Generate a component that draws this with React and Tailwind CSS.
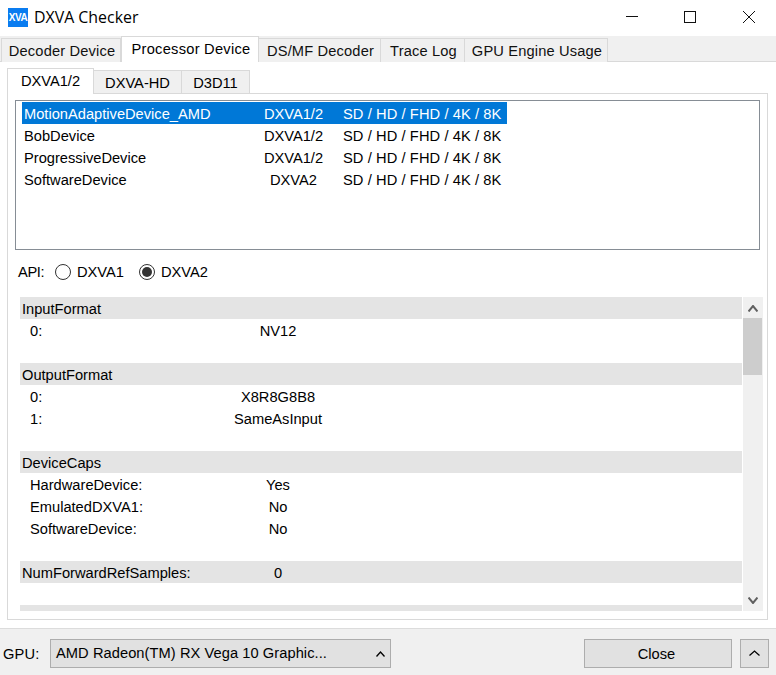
import React from "react";

const sections = [
  { head: "InputFormat", rows: [["0:", "NV12"]] },
  { head: "OutputFormat", rows: [["0:", "X8R8G8B8"], ["1:", "SameAsInput"]] },
  { head: "DeviceCaps", rows: [["HardwareDevice:", "Yes"], ["EmulatedDXVA1:", "No"], ["SoftwareDevice:", "No"]] },
  { head: "NumForwardRefSamples:", value: "0", rows: [] },
  { head: "NumBackwardRefSamples:", value: "0", rows: [] },
];

const devices = [
  ["MotionAdaptiveDevice_AMD", "DXVA1/2"],
  ["BobDevice", "DXVA1/2"],
  ["ProgressiveDevice", "DXVA1/2"],
  ["SoftwareDevice", "DXVA2"],
];

function Tab({ label, width, active, noLeft }) {
  return active ? (
    <div style={{ width }} className="h-[26px] -mb-px bg-white border border-b-0 border-[#d9d9d9] flex justify-center pt-px pl-[2px] text-black z-10 tracking-[0.25px]">
      {label}
    </div>
  ) : (
    <div style={{ width }} className={`h-[24px] mt-[2px] bg-[#f0f0f0] border border-b-0 border-[#d9d9d9] flex justify-center pt-px pl-[2px] text-[#111] tracking-[0.15px] ${noLeft ? "border-l-0" : ""}`}>
      {label}
    </div>
  );
}

function Chevron({ up = true, color = "#000", w = 10, h = 6, sw = 1.3 }) {
  return (
    <svg width={w} height={h} viewBox={`0 0 ${w} ${h}`} fill="none" stroke={color} strokeWidth={sw}>
      <path d={up ? `M0.5 ${h - 0.5} L${w / 2} 1 L${w - 0.5} ${h - 0.5}` : `M0.5 0.5 L${w / 2} ${h - 1} L${w - 0.5} 0.5`} />
    </svg>
  );
}

function Radio({ checked }) {
  return (
    <span className="w-[16px] h-[16px] rounded-full border border-[#333] flex items-center justify-center bg-white">
      {checked && <span className="w-[10px] h-[10px] rounded-full bg-[#333]" />}
    </span>
  );
}

export default function App() {
  return (
    <div className="w-[776px] h-[675px] overflow-hidden bg-white flex flex-col font-['Liberation_Sans',sans-serif] text-[14.67px] leading-[22px] text-black">
      {/* Title bar */}
      <div className="h-[36px] shrink-0 flex items-center pl-[8px] pb-[2px]">
        <div className="w-[20px] h-[19px] mt-px bg-[#0a7cf0] flex items-center justify-center text-white text-[10px] font-bold leading-none tracking-[-0.4px]">XVA</div>
        <div className="ml-[6px] font-['Open_Sans',sans-serif] text-[15.9px]">DXVA Checker</div>
        <div className="ml-auto flex items-center mr-[21px]">
          <svg width="12" height="12" viewBox="0 0 12 12" stroke="#111" fill="none"><path d="M0 5.5H12" /></svg>
          <svg className="ml-[46px]" width="12" height="12" viewBox="0 0 12 12" stroke="#111" fill="none"><rect x="0.5" y="0.5" width="11" height="11" /></svg>
          <svg className="ml-[47px]" width="12" height="12" viewBox="0 0 12 12" stroke="#111" fill="none"><path d="M0 0L12 12M12 0L0 12" /></svg>
        </div>
      </div>

      {/* Main tabs */}
      <div className="h-[26px] shrink-0 bg-[#f0f0f0] border-b border-[#d9d9d9] flex pl-px">
        <Tab label="Decoder Device" width={120} />
        <Tab label="Processor Device" width={138} active />
        <Tab label="DS/MF Decoder" width={122} noLeft />
        <Tab label="Trace Log" width={84} noLeft />
        <Tab label="GPU Engine Usage" width={143} noLeft />
      </div>

      {/* Page */}
      <div className="flex-1 min-h-0 pt-[6px] px-[7px] pb-[8px]">
        <div className="h-full flex flex-col">
          <div className="h-[26px] shrink-0 flex relative z-10">
            <div className="w-[87px] h-[26px] bg-white border border-b-0 border-[#d9d9d9] flex justify-center pt-[1px]">DXVA1/2</div>
            <div className="w-[88px] h-[23px] mt-[2px] bg-[#f0f0f0] border border-b-0 border-l-0 border-[#d9d9d9] flex justify-center pt-[1px]">DXVA-HD</div>
            <div className="w-[68px] h-[23px] mt-[2px] bg-[#f0f0f0] border border-b-0 border-l-0 border-[#d9d9d9] flex justify-center pt-[1px]">D3D11</div>
          </div>
          <div className="flex-1 min-h-0 -mt-px mr-px border border-[#d9d9d9] pt-[6px] px-[7px] pb-[8px] flex flex-col">
            {/* Device list */}
            <div className="h-[150px] shrink-0 border border-[#868d95] pt-px pl-[6px]">
              {devices.map(([name, api], i) => (
                <div key={name} className={`h-[22px] w-[485px] flex pl-[2px] pt-px ${i === 0 ? "bg-[#0078d7] text-white" : ""}`}>
                  <div className="w-[224px] shrink-0">{name}</div>
                  <div className="w-[91px] shrink-0 text-center">{api}</div>
                  <div className="ml-[4px] tracking-[0.09px]">SD / HD / FHD / 4K / 8K</div>
                </div>
              ))}
            </div>

            {/* API radios */}
            <div className="h-[22px] mt-[11px] shrink-0 flex items-center pl-[3px]">
              <span className="w-[37px] tracking-[-0.4px]">API:</span>
              <Radio />
              <span className="ml-[6px] w-[62px]">DXVA1</span>
              <Radio checked />
              <span className="ml-[6px]">DXVA2</span>
            </div>

            {/* Properties */}
            <div className="mt-[14px] flex-1 min-h-0 flex pl-[5px]">
              <div className="w-[722px] shrink-0 overflow-hidden">
                {sections.map((s) => (
                  <div key={s.head} className="mb-[22px]">
                    <div className="h-[22px] bg-[#e4e4e4] flex pl-[2px] pt-px">
                      <span className="w-[252px] shrink-0">{s.head}</span>
                      {s.value && <span>{s.value}</span>}
                    </div>
                    {s.rows.map(([k, v]) => (
                      <div key={k} className="h-[22px] flex pl-[10px] pt-px">
                        <span className="w-[179px] shrink-0">{k}</span>
                        <span className="w-[138px] text-center shrink-0">{v}</span>
                      </div>
                    ))}
                  </div>
                ))}
              </div>
              <div className="w-[20px] shrink-0 ml-px bg-[#f0f0f0] flex flex-col">
                <div className="h-[21px] shrink-0 flex items-center justify-center pt-px"><Chevron color="#606060" w={10} h={7} sw={2} /></div>
                <div className="w-[19px] h-[57px] shrink-0 bg-[#cdcdcd]" />
                <div className="flex-1" />
                <div className="h-[21px] shrink-0 flex items-center justify-center pb-px"><Chevron up={false} color="#606060" w={10} h={7} sw={2} /></div>
              </div>
            </div>
          </div>
        </div>
      </div>

      {/* Bottom bar */}
      <div className="h-[47px] shrink-0 bg-[#f0f0f0] border-t border-[#dcdcdc] flex items-start pt-[10px] pl-[3px]">
        <span className="w-[47px] mt-[4px] tracking-[0.2px]">GPU:</span>
        <div className="w-[341px] h-[29px] bg-[#e1e1e1] border border-[#adadad] flex items-center pl-[5px] pr-[5px]">
          <span className="flex-1 -mt-[2px] tracking-[0.06px]">AMD Radeon(TM) RX Vega 10 Graphic...</span>
          <Chevron w={9} />
        </div>
        <div className="ml-[193px] w-[148px] h-[29px] bg-[#e1e1e1] border border-[#adadad] flex items-center justify-center pr-[3px]">Close</div>
        <div className="ml-[8px] w-[29px] h-[29px] bg-[#e1e1e1] border border-[#adadad] flex items-center justify-center pb-[2px]"><Chevron w={11} /></div>
      </div>
    </div>
  );
}
